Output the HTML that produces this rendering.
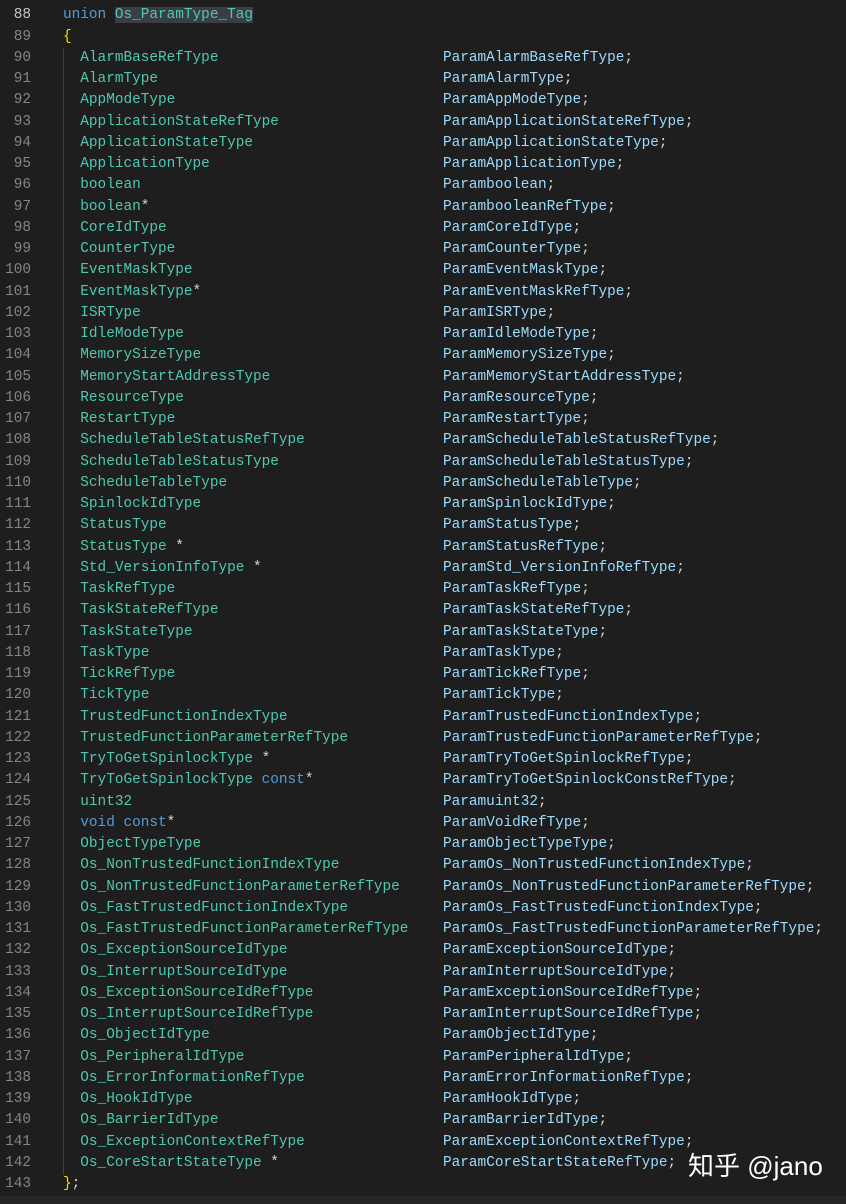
<!DOCTYPE html>
<html><head><meta charset="utf-8"><style>
body{margin:0;width:846px;height:1204px;background:#1e1e1e;overflow:hidden;position:relative;font-family:"Liberation Mono",monospace;font-size:14.4px}
.l{position:absolute;left:0;height:21.25px;line-height:21.25px;white-space:pre;width:846px}
.n{position:absolute;right:815px;color:#858585;text-align:right}
.c{position:absolute;left:63px;color:#d4d4d4}
.t{color:#4ec9b0}.p{color:#9cdcfe}.k{color:#569cd6}.w{color:#d4d4d4}.b{color:#ffd700}
.g{position:absolute;left:63px;top:48px;width:1px;height:1127px;background:#404040}
.wm{position:absolute;left:688px;top:1146px;color:#fff;font-family:"Liberation Sans","Noto Sans CJK SC",sans-serif;font-size:26px}
</style></head><body>
<div class="g"></div>
<div id="code"></div>
<div style="position:absolute;left:0;top:1196px;width:846px;height:8px;background:#252526"></div>
<script>
var rows=[
["AlarmBaseRefType","","ParamAlarmBaseRefType"],
["AlarmType","","ParamAlarmType"],
["AppModeType","","ParamAppModeType"],
["ApplicationStateRefType","","ParamApplicationStateRefType"],
["ApplicationStateType","","ParamApplicationStateType"],
["ApplicationType","","ParamApplicationType"],
["boolean","","Paramboolean"],
["boolean","*","ParambooleanRefType"],
["CoreIdType","","ParamCoreIdType"],
["CounterType","","ParamCounterType"],
["EventMaskType","","ParamEventMaskType"],
["EventMaskType","*","ParamEventMaskRefType"],
["ISRType","","ParamISRType"],
["IdleModeType","","ParamIdleModeType"],
["MemorySizeType","","ParamMemorySizeType"],
["MemoryStartAddressType","","ParamMemoryStartAddressType"],
["ResourceType","","ParamResourceType"],
["RestartType","","ParamRestartType"],
["ScheduleTableStatusRefType","","ParamScheduleTableStatusRefType"],
["ScheduleTableStatusType","","ParamScheduleTableStatusType"],
["ScheduleTableType","","ParamScheduleTableType"],
["SpinlockIdType","","ParamSpinlockIdType"],
["StatusType","","ParamStatusType"],
["StatusType"," *","ParamStatusRefType"],
["Std_VersionInfoType"," *","ParamStd_VersionInfoRefType"],
["TaskRefType","","ParamTaskRefType"],
["TaskStateRefType","","ParamTaskStateRefType"],
["TaskStateType","","ParamTaskStateType"],
["TaskType","","ParamTaskType"],
["TickRefType","","ParamTickRefType"],
["TickType","","ParamTickType"],
["TrustedFunctionIndexType","","ParamTrustedFunctionIndexType"],
["TrustedFunctionParameterRefType","","ParamTrustedFunctionParameterRefType"],
["TryToGetSpinlockType"," *","ParamTryToGetSpinlockRefType"],
["TryToGetSpinlockType","C","ParamTryToGetSpinlockConstRefType"],
["uint32","","Paramuint32"],
["V","","ParamVoidRefType"],
["ObjectTypeType","","ParamObjectTypeType"],
["Os_NonTrustedFunctionIndexType","","ParamOs_NonTrustedFunctionIndexType"],
["Os_NonTrustedFunctionParameterRefType","","ParamOs_NonTrustedFunctionParameterRefType"],
["Os_FastTrustedFunctionIndexType","","ParamOs_FastTrustedFunctionIndexType"],
["Os_FastTrustedFunctionParameterRefType","","ParamOs_FastTrustedFunctionParameterRefType"],
["Os_ExceptionSourceIdType","","ParamExceptionSourceIdType"],
["Os_InterruptSourceIdType","","ParamInterruptSourceIdType"],
["Os_ExceptionSourceIdRefType","","ParamExceptionSourceIdRefType"],
["Os_InterruptSourceIdRefType","","ParamInterruptSourceIdRefType"],
["Os_ObjectIdType","","ParamObjectIdType"],
["Os_PeripheralIdType","","ParamPeripheralIdType"],
["Os_ErrorInformationRefType","","ParamErrorInformationRefType"],
["Os_HookIdType","","ParamHookIdType"],
["Os_BarrierIdType","","ParamBarrierIdType"],
["Os_ExceptionContextRefType","","ParamExceptionContextRefType"],
["Os_CoreStartStateType"," *","ParamCoreStartStateRefType"]];
function pad(n){return " ".repeat(Math.max(1,n));}
var h="";
function line(i,num,content,cur){
 var top=5.4+i*21.25;
 h+='<div class="l" style="top:'+top+'px"><span class="n" style="'+(cur?'color:#c6c6c6':'')+'">'+num+'</span><span class="c">'+content+'</span></div>';
}
line(0,88,'<span class="k">union</span> <span class="t" style="background:#3a3d41">Os_ParamType_Tag</span>',true);
line(1,89,'<span class="b">{</span>');
rows.forEach(function(r,j){
 var left,len;
 if(r[0]=="V"){left='<span class="k">void</span> <span class="k">const</span><span class="w">*</span>';len=11;}
 else if(r[1]=="C"){left='<span class="t">'+r[0]+'</span> <span class="k">const</span><span class="w">*</span>';len=r[0].length+7;}
 else{left='<span class="t">'+r[0]+'</span><span class="w">'+r[1]+'</span>';len=r[0].length+r[1].length;}
 line(j+2,90+j,'  '+left+pad(42-len)+'<span class="p">'+r[2]+'</span><span class="w">;</span>');
});
line(55,143,'<span class="b">}</span><span class="w">;</span>');
document.getElementById('code').innerHTML=h;
</script>
<div class="wm">知乎 @jano</div>
</body></html>
